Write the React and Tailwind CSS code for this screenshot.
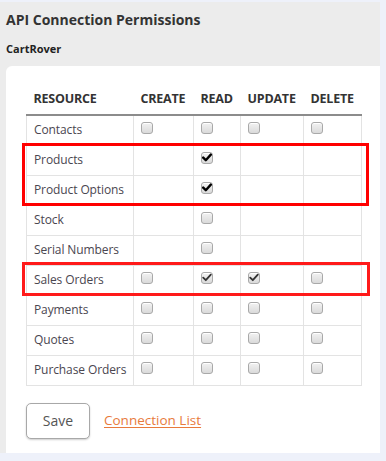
import React from 'react';

const rows = [
  { name: 'Contacts', cells: ['off', 'off', 'off', 'off'] },
  { name: 'Products', cells: [null, 'on', null, null] },
  { name: 'Product Options', cells: [null, 'on', null, null] },
  { name: 'Stock', cells: [null, 'off', null, null] },
  { name: 'Serial Numbers', cells: [null, 'off', null, null] },
  { name: 'Sales Orders', cells: ['off', 'soft', 'soft', 'off'] },
  { name: 'Payments', cells: ['off', 'off', 'off', 'off'] },
  { name: 'Quotes', cells: ['off', 'off', 'off', 'off'] },
  { name: 'Purchase Orders', cells: ['off', 'off', 'off', 'off'] },
];

const Box = ({ state }) => (
  <span className="mt-[6px] flex h-[12px] w-[12px] items-center justify-center rounded-[3px] border border-[#a9a9a9] bg-gradient-to-b from-[#f2f2f2] to-[#dadada] shadow-[inset_0_1px_0_#fff]">
    {state !== 'off' && (
      <svg width="10" height="9" viewBox="0 0 10 9">
        <path
          d="M1.2 4.6 L3.8 7.2 L8.8 1.6"
          fill="none"
          stroke={state === 'on' ? '#000' : '#333'}
          strokeWidth={state === 'on' ? 2.4 : 1.8}
          strokeLinecap="round"
          strokeLinejoin="round"
        />
      </svg>
    )}
  </span>
);

const App = () => {
  return (
    <div className="h-[461px] w-[386px] bg-[#eef1fa] pt-[2px] font-['Open_Sans',sans-serif]">
      <div className="flex h-[451px] w-[380px] flex-col bg-[#ececec] pl-[6px]">
        <h1 className="pt-[8px] text-[14px] font-bold leading-[20px] text-[#333]">API Connection Permissions</h1>
        <div className="mt-[11px] text-[11px] font-bold leading-[16px] text-[#222]">CartRover</div>
        <div className="mt-[9px] flex-1 rounded-tl-[6px] bg-white pl-[20px] pr-[19px] pt-[20px]">
          <div className="relative">
            <table className="w-[335px] table-fixed border-collapse whitespace-nowrap text-left">
              <colgroup>
                <col className="w-[107px]" />
                <col className="w-[60px]" />
                <col className="w-[47px]" />
                <col className="w-[63px]" />
                <col className="w-[58px]" />
              </colgroup>
              <thead>
                <tr className="border-b-2 border-[#8c8c8c]">
                  {['RESOURCE', 'CREATE', 'READ', 'UPDATE', 'DELETE'].map((h) => (
                    <th key={h} className="px-[7px] pb-[3px] text-[12.5px] font-bold leading-[25px] tracking-[-0.2px] text-[#333]">{h}</th>
                  ))}
                </tr>
              </thead>
              <tbody>
                {rows.map((r) => (
                  <tr key={r.name} className="h-[30px]">
                    <td className="border border-[#e3e3e3] px-[7px] align-middle text-[12px] tracking-[-0.1px] text-[#4a4650]">{r.name}</td>
                    {r.cells.map((c, i) => (
                      <td key={i} className="border border-[#e3e3e3] px-[7px] align-top">
                        {c && <Box state={c} />}
                      </td>
                    ))}
                  </tr>
                ))}
              </tbody>
            </table>
            <div className="absolute left-[-4px] top-[57px] h-[63px] w-[347px] border-[3px] border-[#ff0000]" />
            <div className="absolute left-[-4px] top-[176px] h-[34px] w-[348px] border-[3px] border-[#ff1a1a]" />
          </div>
          <div className="mt-[17px] flex items-center gap-[14px]">
            <button className="h-[36px] w-[64px] rounded-[5px] border border-[#a8a8a8] bg-white text-[14px] text-[#555] shadow-[0_1px_2px_rgba(0,0,0,0.2)]">
              Save
            </button>
            <a href="#" className="text-[13.5px] text-[#e87a3c] underline underline-offset-2">Connection List</a>
          </div>
        </div>
      </div>
    </div>
  );
};

export default App;
